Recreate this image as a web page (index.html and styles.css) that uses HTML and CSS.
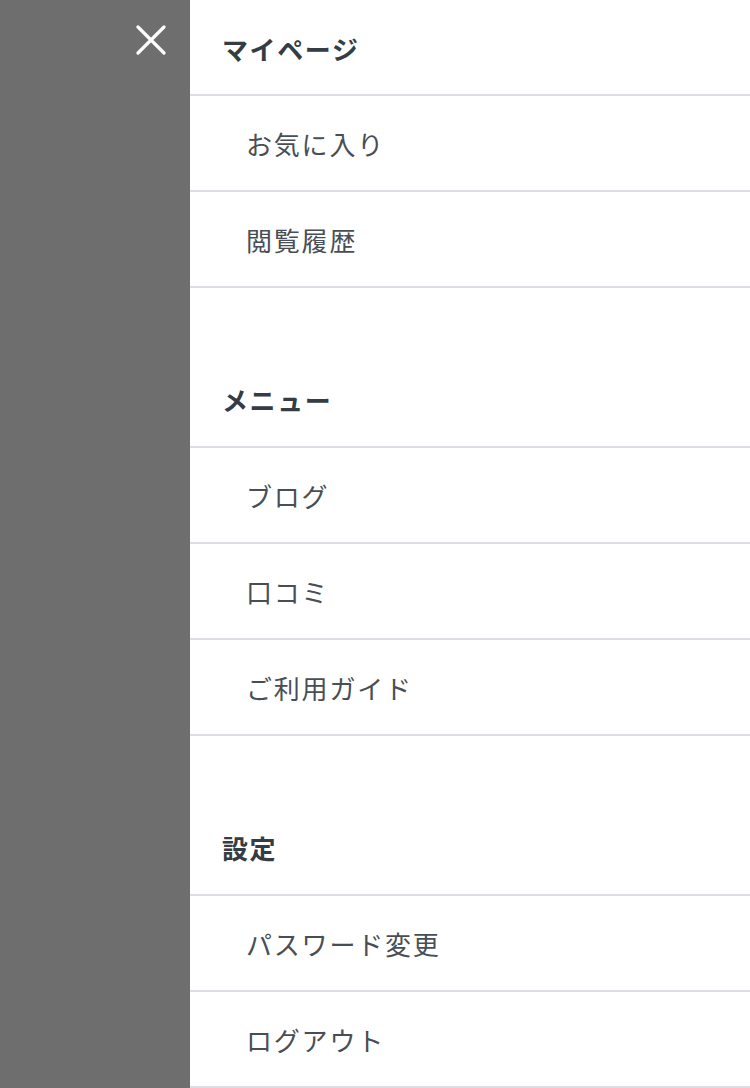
FILE: index.html
```html
<!DOCTYPE html>
<html lang="ja">
<head>
<meta charset="utf-8">
<link rel="stylesheet" href="styles.css">
</head>
<body>
<div class="screen">
  <div class="backdrop">
    <button class="close" aria-label="閉じる">
      <svg width="30" height="30" viewBox="0 0 30 30"><path d="M2 2 L28 28 M28 2 L2 28" stroke="#fff" stroke-width="3.2" stroke-linecap="round" fill="none"/></svg>
    </button>
  </div>
  <nav class="drawer">
    <section class="group">
      <h2 class="head">マイページ</h2>
      <a class="item">お気に入り</a>
      <a class="item">閲覧履歴</a>
    </section>
    <section class="group spaced">
      <h2 class="head">メニュー</h2>
      <a class="item">ブログ</a>
      <a class="item">口コミ</a>
      <a class="item">ご利用ガイド</a>
    </section>
    <section class="group spaced">
      <h2 class="head">設定</h2>
      <a class="item">パスワード変更</a>
      <a class="item">ログアウト</a>
    </section>
  </nav>
</div>
</body>
</html>
```

FILE: styles.css
```css
* { box-sizing: border-box; }
html, body { margin: 0; padding: 0; }
body {
  width: 750px;
  height: 1088px;
  overflow: hidden;
  font-family: "Noto Sans CJK JP", "Noto Sans", sans-serif;
  background: #fff;
}
.screen {
  display: flex;
  height: 1088px;
}
.backdrop {
  width: 190px;
  flex: none;
  background: #6e6e6e;
  display: flex;
  justify-content: flex-end;
  align-items: flex-start;
  padding: 25px 24px 0 0;
}
.close {
  width: 30px;
  height: 30px;
  padding: 0;
  border: 0;
  background: transparent;
  display: flex;
}
.drawer {
  flex: 1;
  display: flex;
  flex-direction: column;
}
.group { display: flex; flex-direction: column; }
.head {
  margin: 0;
  height: 96px;
  display: flex;
  align-items: center;
  padding-left: 32px;
  padding-top: 2px;
  font-size: 26px;
  font-weight: 700;
  letter-spacing: 1.6px;
  color: #353c44;
  border-bottom: 2px solid #dcdfe3;
}
.spaced .head {
  height: 160px;
  padding-top: 64px;
}
.item {
  height: 96px;
  display: flex;
  align-items: center;
  padding-left: 56px;
  font-size: 26px;
  font-weight: 400;
  letter-spacing: 1.8px;
  color: #484e55;
  border-bottom: 2px solid #dcdfe3;
}
```
